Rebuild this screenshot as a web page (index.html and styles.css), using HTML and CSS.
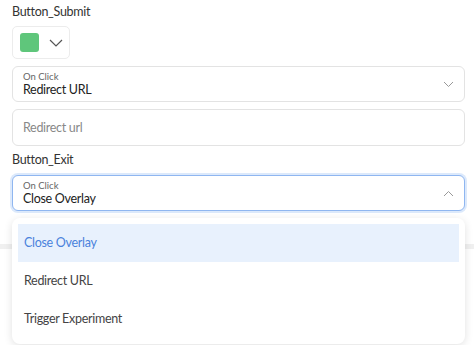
FILE: index.html
```html
<!DOCTYPE html>
<html lang="en">
<head>
    <meta charset="UTF-8">
    <meta name="viewport" content="width=device-width, initial-scale=1.0">
    <title>Button actions</title>
    <link rel="stylesheet" href="styles.css">
</head>
<body>
    <div class="panel">
        <div class="field-label">Button_Submit</div>
        <button class="swatch-picker">
            <span class="swatch"></span>
            <svg width="14" height="8" viewBox="0 0 14 8"><path d="M1 1l6 6 6-6" fill="none" stroke="#555" stroke-width="1.2"/></svg>
        </button>

        <div class="select">
            <div class="select-text">
                <span class="select-caption">On Click</span>
                <span class="select-value">Redirect URL</span>
            </div>
            <svg width="11" height="7" viewBox="0 0 11 7"><path d="M1 1l4.5 4.5L10 1" fill="none" stroke="#999" stroke-width="1"/></svg>
        </div>

        <input class="text-input" type="text" placeholder="Redirect url">

        <div class="field-label">Button_Exit</div>
        <div class="select-wrap">
            <div class="select select-open">
                <div class="select-text">
                    <span class="select-caption">On Click</span>
                    <span class="select-value">Close Overlay</span>
                </div>
                <svg width="11" height="7" viewBox="0 0 11 7"><path d="M1 6l4.5-4.5L10 6" fill="none" stroke="#999" stroke-width="1"/></svg>
            </div>

            <ul class="menu">
                <li class="menu-item active">Close Overlay</li>
                <li class="menu-item">Redirect URL</li>
                <li class="menu-item">Trigger Experiment</li>
            </ul>
        </div>

        <div class="divider"></div>
    </div>
</body>
</html>
```

FILE: styles.css
```css
html, body {
    min-height: 100vh;
}
body {
    margin: 0;
    font-family: Lato, "Noto Sans", sans-serif;
    letter-spacing: -0.3px;
    background-color: #fff;
    color: #333;
}
.panel {
    padding: 4px 9px 0 12px;
    display: flex;
    flex-direction: column;
    min-height: 100vh;
    box-sizing: border-box;
}
.field-label {
    font-size: 12.5px;
    line-height: 15px;
    color: #333;
}
.swatch-picker {
    margin-top: 7px;
    width: 58px;
    height: 33px;
    display: flex;
    align-items: center;
    gap: 10px;
    padding: 0 0 0 7px;
    border: 1px solid #ececec;
    border-radius: 5px;
    background: #fff;
}
.swatch {
    width: 19px;
    height: 19px;
    border-radius: 3px;
    background-color: #5fc67b;
}
.select {
    margin-top: 7px;
    height: 36px;
    box-sizing: border-box;
    display: flex;
    align-items: center;
    justify-content: space-between;
    padding: 0 10px 0 10px;
    border: 1px solid #e3e3e3;
    border-radius: 6px;
    background: #fff;
}
.select-text {
    display: flex;
    flex-direction: column;
}
.select-caption {
    font-size: 9.5px;
    line-height: 11px;
    color: #666;
    letter-spacing: 0;
}
.select-value {
    font-size: 12.5px;
    line-height: 16px;
    color: #222;
}
.select-open {
    margin-top: 8px;
    border-color: #8fb6f0;
    box-shadow: 0 0 0 2px #dce9fb;
}
.text-input {
    margin-top: 7px;
    height: 37px;
    box-sizing: border-box;
    padding: 0 10px;
    border: 1px solid #e3e3e3;
    border-radius: 6px;
    font-family: inherit;
    font-size: 12.5px;
    letter-spacing: -0.3px;
    outline: none;
}
.text-input::placeholder {
    color: #888;
}
.text-input + .field-label {
    margin-top: 6px;
}
.select-wrap {
    position: relative;
}
.menu {
    position: absolute;
    top: 51px;
    left: 0;
    right: 0;
    margin: 0;
    padding: 6px;
    list-style: none;
    background: #fff;
    border-radius: 8px;
    box-shadow: 0 2px 8px rgba(0, 0, 0, 0.12);
    z-index: 2;
}
.menu-item {
    height: 38px;
    line-height: 38px;
    padding: 0 6px;
    font-size: 12.5px;
    color: #444;
}
.menu-item.active {
    background-color: #e8f1fd;
    color: #4a82dc;
}
.divider {
    margin: 33px -9px 0 -12px;
    height: 5px;
    background-color: #f0f0f0;
}
```
